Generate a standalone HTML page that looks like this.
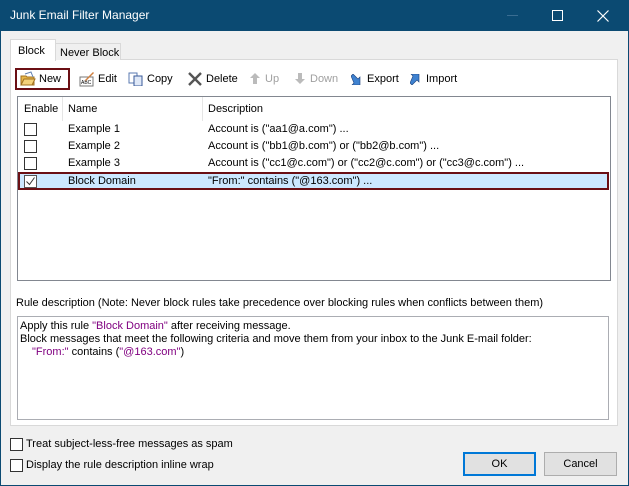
<!DOCTYPE html>
<html><head><style>
*{margin:0;padding:0;box-sizing:border-box}
body{width:629px;height:486px;background:#f0f0f0;font-family:"Liberation Sans",sans-serif;font-size:11px;color:#000;position:relative;overflow:hidden}
.a{position:absolute;white-space:nowrap}
.frame{position:absolute;left:0;top:0;width:629px;height:486px;border:1px solid #0b4a72}
.title{position:absolute;left:0;top:0;width:629px;height:31px;background:#0b4a72;color:#fff;font-size:12px}
.tb{position:absolute;top:70px;height:18px;line-height:18px}
.cb{position:absolute;width:13px;height:13px;border:1px solid #333;background:#fff}
.row{position:absolute;left:18px;width:591px;height:17px;line-height:17px}
.p{color:#800080}
</style></head><body>
<div class="frame"></div>
<div class="title">
 <div class="a" style="left:10px;top:8px">Junk Email Filter Manager</div>
 <div class="a" style="left:507px;top:15px;width:11px;height:1px;background:#3a6d92"></div>
 <div class="a" style="left:552px;top:10px;width:11px;height:11px;border:1px solid #fff"></div>
 <svg class="a" style="left:597px;top:10px" width="12" height="12"><path d="M0.5 0.5L11.5 11.5M11.5 0.5L0.5 11.5" stroke="#fff" stroke-width="1.2"/></svg>
</div>
<div class="a" style="left:10px;top:59px;width:608px;height:367px;background:#fff;border:1px solid #d9d9d9"></div>
<div class="a" style="left:10px;top:39px;width:46px;height:22px;background:#fff;border:1px solid #d9d9d9;border-bottom:none;padding:5px 0 0 7px">Block</div>
<div class="a" style="left:55px;top:43px;width:66px;height:17px;background:#f0f0f0;border:1px solid #d9d9d9;border-bottom:none;padding:3px 0 0 4px">Never Block</div>
<div class="a" style="left:15px;top:68px;width:55px;height:22px;border:2px solid #6b0f14"></div>
<svg class="a" style="left:20px;top:71px" width="16" height="16"><path d="M1 5h5l1 1h7v8H1z" fill="#e8b84a" stroke="#a07020"/><path d="M5 3l6-2 2 5" fill="#fff" stroke="#6080b0"/><path d="M1 14l3-6h11l-3 6z" fill="#f4d27a" stroke="#a07020"/></svg>
<div class="tb" style="left:39px">New</div>
<svg class="a" style="left:79px;top:71px" width="16" height="16"><rect x="1" y="6" width="13" height="9" fill="#fff" stroke="#777"/><text x="2" y="13" font-size="5" font-family="Liberation Sans">ABC</text><path d="M6 9L14 1l1 1-8 8z" fill="#d08040"/></svg>
<div class="tb" style="left:98px">Edit</div>
<svg class="a" style="left:128px;top:72px" width="16" height="14"><rect x="1" y="1" width="8" height="10" fill="#fff" stroke="#5a7ab0"/><rect x="6" y="4" width="8" height="10" fill="#dfe8f7" stroke="#3a5a9a"/></svg>
<div class="tb" style="left:147px">Copy</div>
<svg class="a" style="left:188px;top:72px" width="14" height="14"><path d="M1 1L13 13M13 1L1 13" stroke="#555" stroke-width="2.4"/></svg>
<div class="tb" style="left:206px">Delete</div>
<svg class="a" style="left:250px;top:73px" width="10" height="11"><path d="M5 0L10 5H7v6H3V5H0z" fill="#bbb"/></svg>
<div class="tb" style="left:265px;color:#a0a0a0">Up</div>
<svg class="a" style="left:295px;top:73px" width="10" height="11"><path d="M5 11L10 6H7V0H3v6H0z" fill="#bbb"/></svg>
<div class="tb" style="left:310px;color:#a0a0a0">Down</div>
<svg class="a" style="left:351px;top:74px" width="11" height="11"><path d="M0 2l2-2 5 5 2-2v8H1l2-2z" fill="#3f82d0" stroke="#1a3f7a" stroke-width=".6"/></svg>
<div class="tb" style="left:367px">Export</div>
<svg class="a" style="left:410px;top:74px" width="11" height="11"><path d="M0 9l2 2 5-5 2 2V0H1l2 2z" fill="#3f82d0" stroke="#1a3f7a" stroke-width=".6"/></svg>
<div class="tb" style="left:426px">Import</div>
<div class="a" style="left:17px;top:96px;width:594px;height:185px;border:1px solid #828790;background:#fff"></div>
<div class="a" style="left:62px;top:97px;width:1px;height:24px;background:#e5e5e5"></div>
<div class="a" style="left:202px;top:97px;width:1px;height:24px;background:#e5e5e5"></div>
<div class="a" style="left:24px;top:103px">Enable</div>
<div class="a" style="left:68px;top:103px">Name</div>
<div class="a" style="left:208px;top:103px">Description</div>
<div class="row" style="top:121px"><div class="cb" style="left:6px;top:2px"></div><span class="a" style="left:50px">Example 1</span><span class="a" style="left:190px">Account is ("aa1@a.com") ...</span></div>
<div class="row" style="top:138px"><div class="cb" style="left:6px;top:2px"></div><span class="a" style="left:50px">Example 2</span><span class="a" style="left:190px">Account is ("bb1@b.com") or ("bb2@b.com") ...</span></div>
<div class="row" style="top:155px"><div class="cb" style="left:6px;top:2px"></div><span class="a" style="left:50px">Example 3</span><span class="a" style="left:190px">Account is ("cc1@c.com") or ("cc2@c.com") or ("cc3@c.com") ...</span></div>
<div class="row" style="top:172px;background:#cce8ff;border:2px solid #6b0f14;left:18px;height:18px;line-height:14px"><div class="cb" style="left:4px;top:1px;border-color:#555"><svg width="11" height="11" style="position:absolute;left:0;top:0"><path d="M1.5 5.5l3 3 5-7" stroke="#333" fill="none"/></svg></div><span class="a" style="left:48px">Block Domain</span><span class="a" style="left:188px">"From:" contains ("@163.com") ...</span></div>
<div class="a" style="left:16px;top:297px">Rule description (Note: Never block rules take precedence over blocking rules when conflicts between them)</div>
<div class="a" style="left:17px;top:316px;width:592px;height:104px;border:1px solid #abadb3;background:#fff"></div>
<div class="a" style="left:20px;top:320px">Apply this rule <span class="p">"Block Domain"</span> after receiving message.</div>
<div class="a" style="left:20px;top:333px">Block messages that meet the following criteria and move them from your inbox to the Junk E-mail folder:</div>
<div class="a" style="left:32px;top:346px"><span class="p">"From:"</span> contains (<span class="p">"@163.com"</span>)</div>
<div class="cb" style="left:10px;top:438px"></div>
<div class="a" style="left:26px;top:438px">Treat subject-less-free messages as spam</div>
<div class="cb" style="left:10px;top:459px"></div>
<div class="a" style="left:26px;top:459px">Display the rule description inline wrap</div>
<div class="a" style="left:463px;top:452px;width:73px;height:24px;border:2px solid #0078d7;background:#e1e1e1;text-align:center;line-height:20px">OK</div>
<div class="a" style="left:544px;top:452px;width:73px;height:24px;border:1px solid #adadad;background:#e1e1e1;text-align:center;line-height:22px">Cancel</div>
</body></html>
